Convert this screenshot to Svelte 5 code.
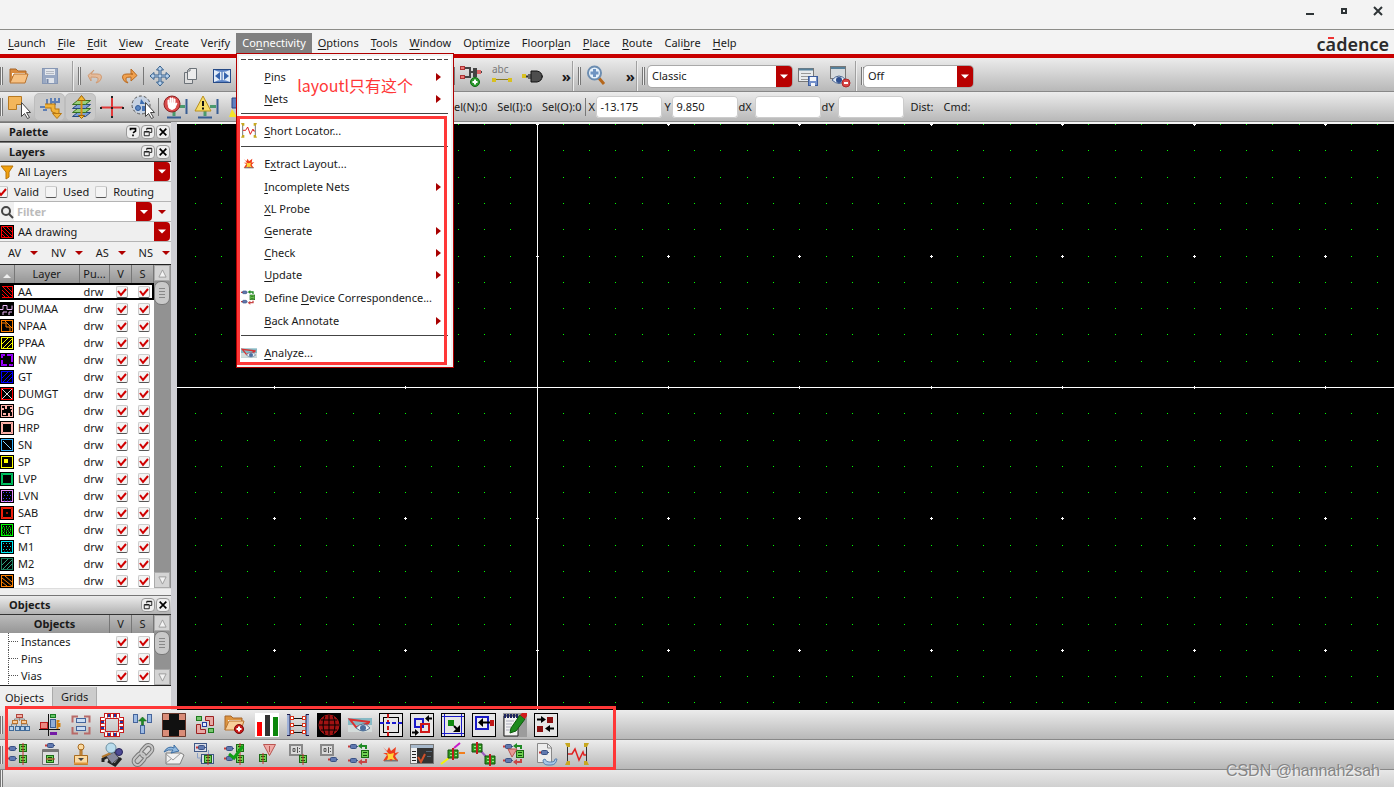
<script lang="ts">
    const menus = [
        "&Launch", "&File", "&Edit", "&View", "&Create", "Ver&ify", "Co&nnectivity", "&Options", "&Tools",
        "&Window", "Opti&mize", "Floorpl&an", "&Place", "&Route", "Cali&bre", "&Help",
    ];

    type Item = { label?: string; icon?: string; sub?: boolean; sep?: boolean };
    const items: Item[] = [
        { label: "&Pins", sub: true },
        { label: "&Nets", sub: true },
        { sep: true },
        { label: "&Short Locator...", icon: "short" },
        { sep: true },
        { label: "E&xtract Layout...", icon: "fire" },
        { label: "&Incomplete Nets", sub: true },
        { label: "&XL Probe" },
        { label: "&Generate", sub: true },
        { label: "&Check", sub: true },
        { label: "&Update", sub: true },
        { label: "Define &Device Correspondence...", icon: "corr" },
        { label: "&Back Annotate", sub: true },
        { sep: true },
        { label: "&Analyze...", icon: "analyze" },
    ];

    // "Ver&ify" -> ["Ver", "i", "fy"]
    function accel(label: string) {
        const i = label.indexOf("&");
        return [label.slice(0, i), label[i + 1], label.slice(i + 2)];
    }

    const box = (x: number, y: number, w: number, h: number, fill: string, stroke: string) =>
        `<rect x="${x + 0.5}" y="${y + 0.5}" width="${w - 1}" height="${h - 1}" fill="${fill}" stroke="${stroke}"/>`;
    const pill = (x: number, y: number) =>
        `<path d="M${x} ${y + 2.5}h3" stroke="#c43c3c" stroke-width="2"/><path d="M${x + 8} ${y + 2.5}h2" stroke="#41598a"/><rect x="${x + 2.5}" y="${y + 0.5}" width="6" height="4" rx="1" fill="#6079b0" stroke="#3b5284"/>`;
    const dev = (x: number, y: number) =>
        `<rect x="${x + 0.5}" y="${y + 0.5}" width="7" height="7" fill="#6fd052" stroke="#1c6a16"/><path d="M${x + 2} ${y + 2.5}h4M${x + 2} ${y + 5.5}h4" stroke="#124a0c"/>`;
    const bigDev = (x: number, y: number) =>
        `<path d="M${x} ${y + 1}h10v8h-10z" fill="#2f9a22" stroke="#14500c"/><path d="M${x + 2} ${y + 3.5}h2M${x + 2} ${y + 6.5}h2M${x + 7} ${y + 3.5}h2M${x + 7} ${y + 6.5}h2" stroke="#9be884"/><path d="M${x + 5} ${y - 1}v12" stroke="#c01c1c" stroke-width="2"/>`;
    const frame = `<rect x=".5" y=".5" width="23" height="23" fill="#e6e6e6" stroke="#000"/>`;
    const corr = pill(0, 1) + pill(0, 15) + dev(13, 7) +
        `<path d="M18 6V3h-5" fill="none" stroke="#1f8a25" stroke-width="2"/><path d="M14 0v6l-4-3z" fill="#1f8a25"/><path d="M18 16v3h-5" fill="none" stroke="#c84545" stroke-width="2"/><path d="M14 16v6l-4-3z" fill="#c84545"/>`;
    const pairs = pill(0, 3) + pill(0, 13) + dev(12, 1) + dev(12, 12) +
        `<path d="M16 0v22" stroke="#c93030"/>`;

    const icons: Record<string, string> = {
        open: `<path d="M3 18V5h6l2 2h8v3" fill="#d98a3d" stroke="#a8672b"/><path d="M5 9h13v3H5z" fill="#fafafa"/><path d="M3 19l4-9h14l-3 9z" fill="#f6c183" stroke="#b8732f"/>`,
        save: `<rect x="4.5" y="4.5" width="15" height="15" fill="#9aa9c3" stroke="#8797b4"/><rect x="7" y="5" width="10" height="6" fill="#e4e7ec"/><path d="M8 7.5h8M8 9.5h8" stroke="#b4b9c2"/><rect x="8" y="14" width="8" height="5" fill="#dfe3ea"/><path d="M9.500 15v4" stroke="#7788a8" stroke-width="2"/>`,
        undo: `<path d="M7 10h6q6 0 4 5q-1 3-5 4q3-3 2-5q-1-1-7-1v4L4 11.500 10 6z" transform="translate(-1 0)" fill="#e5bb9a" stroke="#d09a72"/>`,
        redo: `<path d="M17 10h-6q-6 0-4 5q1 3 5 4q-3-3-2-5q1-1 5-1v4l6-5.500L15 5v5z" fill="#f0a14f" stroke="#b86a22"/>`,
        move: `<path d="M12 2l3.500 4H13v5h5V8.500l4 3.500-4 3.500V13h-5v5h2.500L12 22l-3.500-4H11v-5H6v2.500L2 12l4-3.500V11h5V6H8.500z" fill="#b9d2ec" stroke="#345f8c"/>`,
        copy: `<path d="M5.500 8.500h8v11h-8z" fill="#ddd" stroke="#6c7278"/><path d="M10.500 4.500h7v11h-9v-9z" fill="#ececec" stroke="#6c7278"/><path d="M8 7h3V4" fill="none" stroke="#6c7278"/>`,
        stretch: `<rect x="3.500" y="5.500" width="17" height="13" fill="#5c84c6" stroke="#264a86"/><path d="M4 6q8 4 16 0v12q-8-4-16 0z" fill="#e3edf9"/><path d="M10 8v8l-5-4zM14 8v8l5-4z" fill="#3563ad"/><path d="M12 8v8" stroke="#3563ad"/>`,
        wire: box(1, 2, 5, 4, "#e77", "#a33") + box(1, 11, 5, 4, "#e77", "#a33") + `<path d="M6 4h5v9H6M11 8h4M15 4v9M17 4v9M17 8h6" fill="none" stroke="#444" stroke-width="2"/><rect x="18" y="6" width="4" height="4" fill="#d66"/><circle cx="16" cy="18" r="4.500" fill="#2d9a2d" stroke="#0b6a10"/><path d="M16 15.500v5M13.500 18h5" stroke="#fff" stroke-width="2"/>`,
        label: `<text x="2" y="9" font-size="10" font-family="Noto Sans, sans-serif" fill="#777">abc</text><path d="M4 15.500h16" stroke="#8a7a20"/><rect x="2" y="14" width="4" height="4" fill="#d8c020"/><rect x="18" y="14" width="4" height="4" fill="#d8c020"/>`,
        gate: `<path d="M2 12.500h8M18 12.500h4" stroke="#333" stroke-width="2"/><rect x="1" y="10" width="4" height="4" fill="#d8c020"/><path d="M7 10h3v5H7z" fill="#666"/><path d="M10 7h6q5 1 5 5.500T16 18h-6z" fill="#4d4d4d" stroke="#111"/>`,
        zoom: `<path d="M13 13l6 7" stroke="#b5671c" stroke-width="3"/><circle cx="9.500" cy="9" r="6.500" fill="#e6f1fb" stroke="#6c8db1" stroke-width="2"/><path d="M9.500 5v8M5.500 9h8" stroke="#6f94c2" stroke-width="3"/>`,
        saveView: `<rect x="2.500" y="4.500" width="15" height="13" fill="#e9ecee" stroke="#777"/><path d="M3 5.500h14" stroke="#56809a" stroke-width="2"/><path d="M5 9.500h10M5 12.500h8M5 15.500h7" stroke="#999"/><rect x="12.500" y="12.500" width="9" height="9" fill="#7390cb" stroke="#3d5d9c"/><path d="M14 13h6v4h-6zM15 19h4v3h-4z" fill="#f4f6fa"/>`,
        delView: `<rect x="3.500" y="2.500" width="15" height="12" fill="#d5dadd" stroke="#777"/><path d="M4 4h14" stroke="#56809a" stroke-width="2"/><path d="M5 16q7-8 14 0q-7 7-14 0z" fill="#dfe9f5" stroke="#49648f"/><circle cx="12" cy="16" r="3" fill="#2e4f8f"/><circle cx="19" cy="19" r="4" fill="#d84848" stroke="#b02626"/><path d="M17 19h4" stroke="#fff" stroke-width="2"/>`,
        select: `<path d="M1.500 1.500h13v8H9.500v5h-8z" fill="#f3b65b" stroke="#b77920"/><path d="M14.500 7.500v14l3-3 3 5 2-1-3-5h4z" fill="#fff" stroke="#444"/>`,
        route: `<path d="M2 12h6M5 15h4M9 4v7M13 3v7M17 3v7M21 3v4h-7" stroke="#5f7fb4" stroke-width="2" fill="none"/><path d="M7 11h8v3q0 2 4 2v4" stroke="#b77711" stroke-width="5" fill="none"/><path d="M7 11h8v3q0 2 4 2v4" stroke="#f2b33a" stroke-width="3" fill="none"/><path d="M14.500 18.500h9l-4.500 5z" fill="#f2b33a" stroke="#b77711"/>`,
        layers: `<path d="M3.500 21.500l5-4h13l-5 4z" fill="#7c9fd4" stroke="#27497f"/><path d="M3.500 17.500l5-4h13l-5 4z" fill="#9ad07c" stroke="#37721f"/><path d="M3.500 13.500l5-4h13l-5 4z" fill="#7c9fd4" stroke="#27497f"/><path d="M3.500 9.500l5-4h13l-5 4z" fill="#9ad07c" stroke="#37721f"/><path d="M12.500 22V5" stroke="#d98d14" stroke-width="2"/><path d="M8.500 5.500l4-5 4 5zM9.500 20.500l3 3 3-3z" fill="#f5b62e" stroke="#9b6409"/>`,
        cross: `<path d="M12 2v20M1 12.500h22" stroke="#e23a3a" stroke-width="2"/><path d="M11 1h2v2h-2zM11 21h2v2h-2zM0 12h2v2H0zM22 12h2v2h-2zM11 12h2v2h-2z" fill="#222"/>`,
        area: `<circle cx="10" cy="10" r="9" fill="#c6d2e2" stroke="#555" stroke-dasharray="3 2"/><path d="M10 4l4 5H9z" fill="#3c6db0"/><circle cx="7" cy="13" r="2.500" fill="#5a86c2" stroke="#315b99"/><rect x="11" y="11" width="5" height="5" fill="#4974b4"/><path d="M14.500 7.500v14l3-3 3 5 2-1-3-5h4z" fill="#fff" stroke="#444"/>`,
        stop: `<path d="M23.500 4v15M4 22.500h14" stroke="#375d93" stroke-width="2"/><path d="M11 15v6M16 11.500h6" stroke="#4a9a6e" stroke-width="3"/><circle cx="9" cy="9" r="8" fill="#d94c4c" stroke="#8d2222"/><path d="M5 9V5h1v3h1V3h1v5h1V3h1v5h1V4h1v5l2-1-2 5q-3 3-6 0z" fill="#fff" stroke="#fff"/>`,
        warn: `<path d="M23.500 4v15M4 22.500h14" stroke="#375d93" stroke-width="2"/><path d="M11 15v6M16 11.500h6" stroke="#4a9a6e" stroke-width="3"/><path d="M9 1l8 15H1z" fill="#f7dd69" stroke="#b98f1c"/><path d="M9 6v5M9 12.500v2" stroke="#111" stroke-width="2"/>`,
        flag: `<path d="M7 3h12v10H7z" fill="#5f7fc0" stroke="#2b4582"/><path d="M7 14l5 8H4z" fill="#f5e529"/>`,
        tree: `<path d="M12.500 4v4M7.500 10V6h10v4M4.500 14v-3h5v3M14.500 14v-3h6v3" fill="none" stroke="#888"/>` +
            box(9, 1, 7, 4, "#f3b0a6", "#b0453c") + box(5, 7, 6, 4, "#fbcd9d", "#b97330") + box(14, 7, 6, 4, "#fbcd9d", "#b97330") +
            [2, 8, 13, 18].map((x) => box(x, 13, 5, 5, "#b5cfeb", "#406a98")).join(""),
        align: box(12, 1, 6, 4, "#66c466", "#167b21") + box(12, 6, 6, 9, "#91add6", "#3b5d92") + box(2, 9, 8, 7, "#ed8880", "#bf2020") +
            `<path d="M21.500 8h-2v3h3M22.500 13h-3v3" stroke="#d48414" stroke-width="2" fill="none"/><rect x="12" y="19" width="7" height="3" fill="#741aa5"/><path d="M10.500 1v22M1 16.500h21" stroke="#111"/>`,
        group: `<path d="M9 3.500H3.500v6M15 3.500h5.500v6M3.500 14v6.500H9M20.500 14v6.500H15" fill="none" stroke="#b86a68" stroke-width="2"/>` +
            box(7, 5, 10, 5, "#cadcf2", "#44659c") + box(7, 13, 10, 5, "#cadcf2", "#44659c"),
        chip: `<path d="M4 2.500h16M4 21.500h16M2.500 4v16M21.500 4v16" stroke="#fff" stroke-width="4"/><path d="M4 2.500h16M4 21.500h16M2.500 4v16M21.500 4v16" stroke="#c81a1a" stroke-width="4" stroke-dasharray="1 2"/><path d="M8 2h2M14 2h2M8 22h2M14 22h2M2 8v2M2 14v2M22 8v2M22 14v2" stroke="#26369d" stroke-width="4"/><path d="M5.500 5.500h13v13h-13zM4 .500h16M4 23.500h16M.500 4v16M23.500 4v16" fill="none" stroke="#c81a1a"/>`,
        insert: box(2, 1, 5, 9, "#9dbbe4", "#45649b") + box(16, 1, 5, 9, "#9dbbe4", "#45649b") + box(9, 12, 5, 9, "#9dbbe4", "#45649b") +
            `<path d="M11.500 4l4 4h-3v4h-2V8h-3z" fill="#1d8b25" stroke="#0d5a12" stroke-width=".5"/>`,
        plus: `<rect width="24" height="24" fill="#d98c78"/><path d="M7 0h10v7h7v10h-7v7H7v-7H0V7h7z" fill="#111"/><path d="M.500 .500h23v23H.500z" fill="none" stroke="#6a3a2e"/>`,
        swap: box(3, 3, 6, 5, "#78c66f", "#1c7a1d") + box(15, 15, 6, 5, "#78c66f", "#1c7a1d") + box(9, 9, 5, 5, "#e5ebfa", "#233aa0") +
            `<path d="M12.500 3.500h8v9h-4v-5h-4zM3.500 11.500h4v5h5v4h-9z" fill="#e7a9a5" stroke="#9c2020"/>`,
        folder: `<path d="M1 17V3h6l2 2h9v3" fill="#dc9440" stroke="#a8672b"/><path d="M4 7h13v4H4z" fill="#fafafa"/><path d="M1 17l4-9h15l-3 9z" fill="#f8cf9a" stroke="#b8732f"/><circle cx="15" cy="16" r="4.500" fill="#c81818" stroke="#7c0808"/><path d="M15 13.500v5M12.500 16h5" stroke="#fff" stroke-width="2"/>`,
        bars: `<rect width="24" height="24" fill="#fff"/><rect x="2" y="9" width="5" height="14" fill="#f00"/><rect x="10" y="2" width="5" height="21" fill="#333"/><rect x="18" y="4" width="5" height="19" fill="#0a860a"/>`,
        ladder: `<path d="M1 1.500h3v21H1M23 1.500h-3v21h3" fill="#9db0d8" stroke="#1b1b4b"/><path d="M5 5.500h14M5 12.500h14M5 19.500h14" stroke="#111"/>` +
            [3, 10, 17].map((y) => box(4, y, 4, 4, "#fff", "#d8341c") + box(16, y, 4, 4, "#fff", "#d8341c")).join(""),
        globe: `<rect width="24" height="24"/><circle cx="12" cy="12" r="10" fill="#a01212" stroke="#a81515"/><path d="M12 2v20M2 12h20M4 7h16M4 17h16M8 3q-4 9 0 18M16 3q4 9 0 18" fill="none" stroke="#000"/>`,
        analyze: `<rect y="5" width="24" height="14" fill="#86b9c4"/><path d="M0 12h24v7H0z" fill="#d4dcda"/><path d="M22 9L2 6.500 8 14l13-4" fill="none" stroke="#d93030" stroke-width="2"/><path d="M8 15q7-8 14 0q-7 6-14 0z" fill="#e9eff6" stroke="#587494"/><circle cx="15" cy="15" r="3" fill="#4c6f9e"/>`,
        center: frame + `<rect x="4.500" y="4.500" width="15" height="15" fill="none" stroke="#000"/><path d="M9 1v22" stroke="#d01818" stroke-width="2" stroke-dasharray="4 2"/><path d="M1 10h22" stroke="#1a1ad0" stroke-width="2" stroke-dasharray="4 2"/>`,
        replace: frame + `<rect x="5" y="6" width="8" height="8" fill="none" stroke="#1a1ac8" stroke-width="2"/><rect x="11" y="11" width="8" height="8" fill="none" stroke="#d01818" stroke-width="2"/><path d="M22 5.500h-4M2 19.500h4" stroke="#000" stroke-width="2"/><path d="M19 2v7l-4-3.500zM5 16v7l4-3.500z"/>`,
        expand: frame + `<path d="M3.500 1v22M20.500 1v22M1 3.500h22M1 20.500h22" stroke="#1a1ac8"/><rect x="7" y="7" width="6" height="6" fill="#118a11"/><path d="M13 13l4 4" stroke="#000" stroke-width="2"/><path d="M19 12v7h-7z"/>`,
        pull: frame + `<rect x="4" y="4" width="12" height="12" fill="#eee" stroke="#1a1ac8" stroke-width="2"/><rect x="18" y="7" width="4" height="6" fill="#c01818"/><path d="M10 9.500h8" stroke="#000" stroke-width="2"/><path d="M11 5v9L6 9.500z"/>`,
        note: `<rect width="24" height="24" fill="#9c9c9c"/><path d="M1 3h14v20H1z" fill="#f2f2f2" stroke="#222"/><path d="M1 3h14" stroke="#1c2460" stroke-width="4" stroke-dasharray="2 1"/><path d="M3 8h8M3 11h6M3 14h5M3 17h8" stroke="#aab"/><path d="M8 15L17 2l5 4-9 12-6 2z" fill="#1d8a1d" stroke="#0b5a0b"/><path d="M17 2l2-2h5v3l-2 3z" fill="#d01c1c"/>`,
        exchange: frame + `<rect x="13" y="4" width="6" height="6" fill="#8d1010"/><rect x="3" y="13" width="6" height="6" fill="#8d1010"/><path d="M3 6.500h5M20 15.500h-5" stroke="#000" stroke-width="2"/><path d="M7 3v7l5-3.500zM16 12v7l-5-3.500z"/>`,
        pairs,
        cell: `<path d="M4.500 6.500h16v15h-16z" fill="#ddd" stroke="#777"/><path d="M5 8h15" stroke="#777" stroke-width="2"/>` + pill(7, 0) + dev(8, 12) + `<path d="M8 16h9" stroke="#c93030"/>`,
        stamp: `<circle cx="12" cy="4" r="3" fill="#fbd9a0" stroke="#a86a1e"/><path d="M11 7h2v6h-2z" fill="#d49545" stroke="#a86a1e"/><path d="M5.500 12.500h13v9h-13z" fill="#fbd9a0" stroke="#a86a1e"/><path d="M9 15h6l-3 3z" fill="#444"/><path d="M5 20.500h14" stroke="#e0973c" stroke-width="2"/>`,
        probe: `<path d="M10 12l-7 4v3M8 18l7 4 6-7" fill="none" stroke="#222" stroke-width="3"/><path d="M6 13l8-4 5 6-7 6z" fill="#86889c" stroke="#333"/><path d="M2 14l9-4" stroke="#b57b32" stroke-width="2"/><circle cx="11" cy="5" r="5" fill="#b9dcec" stroke="#6e91a3"/><circle cx="19" cy="9" r="3.500" fill="#4d4a94" stroke="#27245a"/>`,
        link: `<g transform="rotate(-48 12 12)" fill="none"><rect x="0" y="8" width="13" height="8" rx="4" stroke="#777" stroke-width="4"/><rect x="11" y="8" width="13" height="8" rx="4" stroke="#777" stroke-width="4"/><rect x="0" y="8" width="13" height="8" rx="4" stroke="#c6c6c6" stroke-width="2"/><rect x="11" y="8" width="13" height="8" rx="4" stroke="#c6c6c6" stroke-width="2"/></g>`,
        mail: `<path d="M4 10h15l3 2-4 9H4z" fill="#f1f1f1" stroke="#808080"/><path d="M4 11l7 6 8-7M4 20l5-4" fill="none" stroke="#999"/><path d="M2 9q4-7 10-4V2l5 6-8 2 2-3q-5-1-9 2z" fill="#8fb8df" stroke="#3d6ea2"/>`,
        stack: box(1, 0, 13, 9, "#d9dde8", "#3f5785") + pill(3, 2) + `<path d="M4.500 10v5h11v-8M7.500 16v3" fill="none" stroke="#8aa0c8"/>` + box(8, 11, 13, 10, "#d9dde8", "#3f5785") + dev(11, 12) + `<path d="M15 11v11" stroke="#c93030"/>`,
        verify: pairs + `<path d="M5 11l5 4 9-12" fill="none" stroke="#10a016" stroke-width="3"/>`,
        funnel: `<path d="M8.500 1.500h12l-6 11z" fill="#efaaa6" stroke="#b95450"/><path d="M14.500 3v6" stroke="#b95450"/>` + dev(4, 11) + `<path d="M8 10v11" stroke="#c93030"/>`,
        sheetDev: `<rect x="4" y="2" width="12" height="10" fill="#dcdcdc" stroke="#888" stroke-width="2"/><path d="M7 5.500h2v3H7zM11.500 4v6M13 5.500h1M13 8.500h1" fill="none" stroke="#555"/>` + dev(13, 12) + `<path d="M17 11v11" stroke="#c93030"/>`,
        sheetPill: `<rect x="4" y="2" width="12" height="10" fill="#dcdcdc" stroke="#888" stroke-width="2"/><path d="M7 5.500h2v3H7zM11.500 4v6M13 5.500h1M13 8.500h1" fill="none" stroke="#555"/>` + pill(11, 14),
        corr,
        fire: `<path d="M5 17.500h14" stroke="#777" stroke-width="2"/><path d="M4 4l4 4 2-4 2 4 5-4-1 6 4-1-4 4 3 5-5-2-2 2-2-2-6 2 4-6-4-2 5 0z" fill="#ee3c1c"/><path d="M8 10l3 1 4-1-1 4 2 3-4-1-4 1 1-3z" fill="#ffd43a"/>`,
        list: `<rect x=".500" y="1.500" width="23" height="19" fill="#333" stroke="#777"/><path d="M1 3.500h22" stroke="#a7b9cc" stroke-width="3"/><rect x="1" y="5" width="6" height="15" fill="#eee"/><path d="M2 8.500h4M2 11.500h4M2 14.500h4M2 17.500h4" stroke="#222"/><path d="M8 14l3 5L15 11" fill="none" stroke="#d25028" stroke-width="2"/><path d="M16 8.500h6M17 13.500h4" stroke="#567"/>`,
        flight: `<path d="M0 21l8-6" stroke="#f4f40a" stroke-width="2"/><path d="M13 5l6-5" stroke="#c81ac8" stroke-width="2"/><path d="M18 10h6" stroke="#f27e1c" stroke-width="2"/>` + bigDev(7, 6),
        net: `<path d="M8 7l9 10" stroke="#9a5ac0" stroke-width="2"/>` + bigDev(0, 0) + bigDev(13, 12),
        corrFilter: corr + `<path d="M5 6h9l-5 8z" fill="#e59a96" stroke="#b95450"/>`,
        docDown: `<path d="M3.500 .500h10l4 4v15h-14z" fill="#ededed" stroke="#888"/><path d="M13.500 1v4h4" fill="none" stroke="#888"/>` + pill(5, 7) + `<path d="M11 16q1 3 4 3h3q3 0 3-3h2q-1 6-6 6h-3q-5 0-5-5z" fill="#a9c6e6" stroke="#5c82b0"/>`,
        short: `<path d="M2.500 2v19M21.500 2v19" stroke="#333"/><path d="M3 11h4l3-5 4 11 4-8 1 3h2" fill="none" stroke="#e02020" stroke-width="1.500"/><path d="M0 0h5v4H2zM24 0h-5v4h3zM0 22h5v-4H2zM24 22h-5v-4h3z" fill="#c8a820"/>`,
    };

    const bottomA = ["tree", "align", "group", "chip", "insert", "plus", "swap", "folder", "bars", "ladder", "globe", "analyze", "center", "replace", "expand", "pull", "note", "exchange"];
    const bottomB = ["pairs", "cell", "stamp", "probe", "link", "mail", "stack", "verify", "funnel", "sheetDev", "sheetPill", "corr", "fire", "list", "flight", "net", "corrFilter", "docDown", "short"];

    const diag = (c: string) => `<path d="M2 9l3 3M2 5l7 7M3 2l9 9M7 2l5 5" stroke="${c}"/>`;
    const slash = (c: string) => `<path d="M2 8l6-6M3 12l9-9M7 12l5-5" fill="none" stroke="${c}"/>`;
    const dots = (c: string) => `<path d="M3 3.500h9M4 6.500h9M3 9.500h9M4 12h9" stroke="${c}" stroke-dasharray="1 2"/>`;
    const thick = (c: string) => `<path d="M2.500 2.500h9v9h-9z" fill="none" stroke="${c}"/>`;
    const layers = [
        { name: "AA", color: "#f00", art: diag("#f00") },
        { name: "DUMAA", color: "#000", art: `<path d="M0 7.500h3v-4h4v4h5v-4M3 13V10h4M9 13v-3h3" fill="none" stroke="#e9b4f4"/>` },
        { name: "NPAA", color: "#ff8000", art: `<path d="M2 4h4v4h4v4M5 2l8 8" fill="none" stroke="#ff8000"/>` },
        { name: "PPAA", color: "#ff0", art: slash("#ff0") },
        { name: "NW", color: "#9a00ff", art: thick("#9a00ff") + `<path d="M6 1v2M1 6h2M11 10h2M8 11v2" stroke="#000" stroke-width="2"/>` },
        { name: "GT", color: "#00f", art: slash("#00f") },
        { name: "DUMGT", color: "#f00", art: `<path d="M2 2l10 10M12 2L2 12" stroke="#ddd"/>` },
        { name: "DG", color: "#ffb0a8", art: `<path d="M2 5h2M6 2v3M10 4h2M3 10h3M9 9v3M11 7h1" stroke="#ffb0a8" stroke-width="2"/>` },
        { name: "HRP", color: "#ffb0a8", art: thick("#ffb0a8") },
        { name: "SN", color: "#35b4ff", art: `<path d="M3 3l8 8" stroke="#8fd4ff"/>` },
        { name: "SP", color: "#ff0", art: `<path d="M4 4h4v4H4z" fill="#ff0"/>` },
        { name: "LVP", color: "#00c060", art: thick("#00c060") },
        { name: "LVN", color: "#e890ff", art: dots("#4040ff") },
        { name: "SAB", color: "#f0200c", art: thick("#f0200c") + `<path d="M6 6h2v2H6z" fill="#a01000"/>` },
        { name: "CT", color: "#0f0", art: dots("#0f0") + `<path d="M2 5h10M2 8h10M2 11h10" stroke="#0f0" stroke-dasharray="1 1"/>` },
        { name: "M1", color: "#00f0ff", art: dots("#00d0e0") },
        { name: "M2", color: "#208060", art: slash("#30a080") },
        { name: "M3", color: "#ff8000", art: `<path d="M2 8l5 4M2 4l10 8M5 2l7 6" stroke="#ff8000"/>` },
    ];
    const objects = ["Instances", "Pins", "Vias"];

    // grid of the layout canvas, origin where the two axes cross
    const origin = { x: 360, y: 263 };
    const pitch = 26.28;
    let width = $state(1217);
    let height = $state(586);

    const grid = $derived.by(() => {
        let minor = "";
        let major = "";
        for (let i = Math.ceil(-origin.x / pitch); origin.x + i * pitch < width; i++) {
            const x = Math.floor(origin.x + i * pitch);
            for (let j = Math.ceil(-origin.y / pitch - 0.1); origin.y + j * pitch < height; j++) {
                const y = Math.round(origin.y + j * pitch);
                if (i % 5 === 0 && j % 5 === 0) major += `M${x - 1} ${y}h3v1h-3zM${x} ${y - 1}h1v3h-1z`;
                else if (i !== 0 && j !== 0) minor += `M${x} ${y}h1v1h-1z`;
            }
        }
        return { minor, major };
    });
</script>

{#snippet text(label: string)}
    {@const [pre, key, post] = accel(label)}
    <span>{pre}<u>{key}</u>{post}</span>
{/snippet}

{#snippet tool(name: string, on = false)}
    <button class="tool" class:on aria-label={name}>
        <svg viewBox="0 0 24 24">{@html icons[name]}</svg>
    </button>
{/snippet}

{#snippet dock(title: string, help = false)}
    <header class="dock">
        <b>{title}</b>
        {#if help}
            <button aria-label="Help"><svg viewBox="0 0 12 12"><path d="M3 4V2h6v3L6 7M6 9v2" /></svg></button>
        {/if}
        <button aria-label="Float"><svg viewBox="0 0 12 12"><path class="thin" d="M4.500 4V1.500h6v5H8M1.500 5.500h6v5h-6zM2 6h5M5 2h5" /></svg></button>
        <button aria-label="Close"><svg viewBox="0 0 12 12"><path d="M2 2l8 8M10 2l-8 8" /></svg></button>
    </header>
{/snippet}

{#snippet scrollbar()}
    <div class="scrollbar">
        <span class="step"><svg viewBox="0 0 10 10"><path d="M5 1l4 8H1z" /></svg></span>
        <span class="thumb"></span>
        <span class="step end"><svg viewBox="0 0 10 10"><path d="M5 9l4-8H1z" /></svg></span>
    </div>
{/snippet}

<div class="app">
    <div class="titlebar">
        <button aria-label="Minimize"><svg viewBox="0 0 10 10"><path d="M1 8h8" /></svg></button>
        <button aria-label="Maximize"><svg viewBox="0 0 10 10"><path d="M3 3h4v4H3z" /></svg></button>
        <button aria-label="Close window"><svg viewBox="0 0 10 10"><path d="M1 1l8 8M9 1L1 9" /></svg></button>
    </div>

    <nav class="menubar">
        {#each menus as menu}
            <div class="menu" class:open={menu === "Co&nnectivity"}>
                <button>{@render text(menu)}</button>
                {#if menu === "Co&nnectivity"}
                    <div class="popup">
                        <div class="tear"></div>
                        {#each items as item}
                            {#if item.label}
                                <button class="item" class:tall={item.icon}>
                                    <span class="item-icon">
                                        {#if item.icon}<svg viewBox="0 0 24 24">{@html icons[item.icon]}</svg>{/if}
                                    </span>
                                    {@render text(item.label)}
                                    {#if item.sub}<i class="sub"></i>{/if}
                                </button>
                            {:else}
                                <hr />
                            {/if}
                        {/each}
                        <div class="mark"></div>
                        <div class="note">layoutl只有这个</div>
                    </div>
                {/if}
            </div>
        {/each}
        <div class="brand">c<span>a</span>dence</div>
    </nav>

    <div class="toolbar first">
        <div class="group"><i class="grip"></i>{@render tool("open")}{@render tool("save")}</div>
        <div class="group edit">
            <i class="grip"></i>{@render tool("undo")}{@render tool("redo")}<i class="divider"></i>
            {@render tool("move")}{@render tool("copy")}{@render tool("stretch")}
        </div>
        <div class="group tight">
            <i class="grip"></i>{@render tool("wire")}{@render tool("label")}{@render tool("gate")}
            <button class="more">»</button>
        </div>
        <div class="group tight"><i class="grip"></i>{@render tool("zoom")}<button class="more">»</button></div>
        <div class="group tight">
            <i class="grip"></i>
            <select class="combo workspace" aria-label="Workspace"><option>Classic</option></select>
            {@render tool("saveView")}{@render tool("delView")}
        </div>
        <div class="group last">
            <i class="grip"></i>
            <select class="combo dim" aria-label="Dimming"><option>Off</option></select>
        </div>
    </div>

    <div class="toolbar">
        <div class="group modes">
            <i class="grip"></i>{@render tool("select")}{@render tool("route", true)}{@render tool("layers", true)}
            {@render tool("cross")}{@render tool("area")}<i class="divider"></i>
            {@render tool("stop")}{@render tool("warn")}{@render tool("flag")}
        </div>
        <div class="status">
            <span>Sel(N):0</span><span>Sel(I):0</span><span>Sel(O):0</span>
        </div>
        <i class="divider"></i>
        <label class="coord">X<input value="-13.175" /></label>
        <label class="coord">Y<input value="9.850" /></label>
        <label class="coord wide">dX<input /></label>
        <label class="coord wide">dY<input /></label>
        <div class="status end"><span>Dist:</span><span>Cmd:</span></div>
    </div>

    <main>
        <aside>
            {@render dock("Palette", true)}
            {@render dock("Layers")}
            <div class="row">
                <svg class="lead" viewBox="0 0 14 14"><path d="M1 1h12L9 7v5l-3 2V7z" fill="#f2a10c" stroke="#b87408" /></svg>
                <select class="combo flat" aria-label="Layer set"><option>All Layers</option></select>
            </div>
            <div class="row checks">
                <label><input type="checkbox" checked />Valid</label>
                <label><input type="checkbox" />Used</label>
                <label><input type="checkbox" />Routing</label>
            </div>
            <div class="row filter">
                <svg class="lead" viewBox="0 0 14 14"><circle cx="6" cy="6" r="4" fill="#eee" stroke="#444" stroke-width="2" /><path d="M9 9l4 4" stroke="#444" stroke-width="2" /></svg>
                <input placeholder="Filter" aria-label="Filter" />
                <button class="drop" aria-label="Filter history"></button>
                <i class="caret"></i>
            </div>
            <div class="row">
                <svg class="lead" viewBox="0 0 14 14"><rect width="14" height="14" /><path d="M1.500 1.500h11v11h-11z" fill="#000" stroke="#f00" />{@html diag("#f00")}</svg>
                <select class="combo flat" aria-label="Active layer"><option>AA drawing</option></select>
            </div>
            <div class="row toggles">
                {#each ["AV", "NV", "AS", "NS"] as name}
                    <button>{name}<i class="caret"></i></button>
                {/each}
            </div>

            <div class="list layers">
                <div class="scroll">
                    <table>
                        <thead>
                            <tr><th class="c-sw"><i class="sort"></i></th><th>Layer</th><th class="c-pu">Pu...</th><th class="c-box">V</th><th class="c-box">S</th></tr>
                        </thead>
                        <tbody>
                            {#each layers as layer, i}
                                <tr class:current={i === 0}>
                                    <td class="c-sw">
                                        <svg viewBox="0 0 14 14">
                                            <rect width="14" height="14" />
                                            <rect x="1.5" y="1.5" width="11" height="11" stroke={layer.color} />
                                            {@html layer.art}
                                        </svg>
                                    </td>
                                    <td>{layer.name}</td>
                                    <td>drw</td>
                                    <td class="tick"><input type="checkbox" checked aria-label="{layer.name} visible" /></td>
                                    <td class="tick"><input type="checkbox" checked aria-label="{layer.name} selectable" /></td>
                                </tr>
                            {/each}
                        </tbody>
                    </table>
                </div>
                {@render scrollbar()}
            </div>

            {@render dock("Objects")}
            <div class="list objects">
                <div class="scroll">
                    <table>
                        <thead>
                            <tr><th><b>Objects</b></th><th class="c-box">V</th><th class="c-box">S</th></tr>
                        </thead>
                        <tbody>
                            {#each objects as name}
                                <tr>
                                    <td class="branch">{name}</td>
                                    <td class="tick"><input type="checkbox" checked aria-label="{name} visible" /></td>
                                    <td class="tick"><input type="checkbox" checked aria-label="{name} selectable" /></td>
                                </tr>
                            {/each}
                        </tbody>
                    </table>
                </div>
                {@render scrollbar()}
            </div>
            <div class="tabs"><button class="active">Objects</button><button>Grids</button></div>
        </aside>

        <div class="canvas" bind:clientWidth={width} bind:clientHeight={height}>
            <svg shape-rendering="crispEdges">
                <path d={grid.minor} fill="#00ff00" />
                <path d={grid.major} fill="#fff" />
                <rect x={origin.x} y="0" width="1" height="100%" fill="#fff" />
                <rect x="0" y={origin.y} width="100%" height="1" fill="#fff" />
            </svg>
        </div>
    </main>

    <footer>
        <div class="toolbar"><i class="grip"></i>{#each bottomA as name}{@render tool(name)}{/each}</div>
        <div class="toolbar"><i class="grip"></i>{#each bottomB as name}{@render tool(name)}{/each}</div>
        <div class="toolbar prompt"><i class="grip"></i></div>
        <div class="mark"></div>
        <div class="watermark">CSDN @hannah2sah</div>
    </footer>
</div>

<style>
    :global(body) {
        background: #efefef;
    }

    .app {
        display: flex;
        flex-direction: column;
        height: 100vh;
        overflow: hidden;
        font: 11px/16px "Noto Sans", sans-serif;
        color: #1a1a1a;
    }

    .app :global(*) {
        box-sizing: border-box;
    }

    button,
    input,
    select {
        font: inherit;
        color: inherit;
        margin: 0;
        padding: 0;
        border: 0;
        background: none;
        border-radius: 0;
    }

    svg {
        display: block;
        overflow: visible;
    }

    i {
        flex: none;
    }

    .titlebar {
        flex: none;
        display: flex;
        justify-content: flex-end;
        gap: 24px;
        height: 30px;
        padding: 6px 11px 0 0;
        background: #f3f3f3;
        border-bottom: 1px solid #8c8c88;
    }

    .titlebar button {
        width: 10px;
        height: 10px;
    }

    .titlebar path {
        fill: none;
        stroke: #2e3436;
        stroke-width: 2;
    }

    .menubar {
        flex: none;
        display: flex;
        height: 28px;
        padding-top: 3px;
        padding-left: 2px;
        background: #f3f3f3;
        border-bottom: 4px solid #c80000;
    }

    .menu {
        position: relative;
        height: 20px;
    }

    .menu > button {
        height: 20px;
        padding: 0 6px;
        white-space: nowrap;
    }

    .menu.open > button {
        background: #808080;
        color: #fff;
    }

    u {
        text-underline-offset: 2px;
    }

    .brand {
        margin-left: auto;
        padding-right: 5px;
        font-size: 18px;
        line-height: 22px;
        font-weight: 600;
        color: #2b2b2b;
    }

    .brand span {
        position: relative;
    }

    .brand span::before {
        content: "";
        position: absolute;
        top: 5px;
        left: 2px;
        width: 6px;
        height: 2px;
        background: #e33;
    }

    .popup {
        position: absolute;
        z-index: 5;
        top: 20px;
        left: 0;
        width: 218px;
        padding: 0 5px 2px 4px;
        background: #fff;
        border: 1px solid #b00000;
        box-shadow: inset 0 0 0 2px #f2f2f2;
    }

    .tear {
        height: 12px;
        background: repeating-linear-gradient(90deg, #444 0 5px, transparent 5px 7px) 0 5px / 100% 1px no-repeat;
    }

    .item {
        display: flex;
        align-items: center;
        width: 100%;
        height: 22px;
        padding-right: 7px;
        text-align: left;
        white-space: nowrap;
    }

    .item.tall {
        height: 24px;
    }

    .item-icon {
        flex: none;
        width: 23px;
    }

    .item-icon svg {
        width: 16px;
        height: 16px;
    }

    .sub {
        margin-left: auto;
        border-left: 5px solid #a80000;
        border-top: 4px solid transparent;
        border-bottom: 4px solid transparent;
    }

    hr {
        height: 9px;
        margin: 0;
        border: 0;
        background: linear-gradient(#444, #444) 0 3px / 100% 1px no-repeat;
    }

    .mark {
        position: absolute;
        border: 3px solid #ff3737;
        pointer-events: none;
    }

    .popup .mark {
        top: 62px;
        bottom: 2px;
        left: 0;
        right: 6px;
    }

    .note {
        position: absolute;
        top: 19px;
        left: 60px;
        font: 16px/24px "Noto Sans CJK SC", sans-serif;
        color: #ff3737;
        white-space: nowrap;
    }

    .toolbar {
        flex: none;
        display: flex;
        align-items: center;
        height: 30px;
        background: linear-gradient(#ececec, #b8b8b8);
        border-bottom: 1px solid #888;
    }

    .toolbar.first {
        height: 34px;
        padding-top: 3px;
    }

    .group {
        flex: none;
        display: flex;
        align-items: center;
        height: 100%;
        padding-right: 7px;
        border-right: 1px solid #a0a0a0;
    }

    .group + .group {
        padding-left: 4px;
        border-left: 1px solid #eee;
    }

    .group.tight {
        padding-right: 1px;
    }

    .group.last,
    .group.modes {
        border-right: 0;
    }

    .edit {
        width: 374px;
    }

    .modes {
        width: 448px;
    }

    .grip {
        width: 3px;
        height: 18px;
        background: repeating-linear-gradient(90deg, #777 0 1px, #eee 1px 2px);
    }

    .divider {
        width: 1px;
        height: 18px;
        background: #777;
    }

    .tool {
        flex: none;
        display: flex;
        align-items: center;
        justify-content: center;
        width: 31px;
        height: 28px;
    }

    .tool.on {
        background: #c9c9c9;
        border: 1px solid #bdbdbd;
        border-radius: 5px;
    }

    .tool svg {
        width: 24px;
        height: 24px;
    }

    .more {
        width: 23px;
        font-size: 15px;
        font-weight: 700;
        text-align: right;
    }

    .combo {
        appearance: none;
        height: 21px;
        padding-left: 4px;
        border-radius: 4px;
        background: #fff url("data:image/svg+xml,%3Csvg xmlns='http://www.w3.org/2000/svg' width='16' height='22'%3E%3Cpath fill='%23b80000' d='M0 0h16v22H0z'/%3E%3Cpath fill='%23fff' d='M4 9h8l-4 4z'/%3E%3C/svg%3E") right center no-repeat;
        box-shadow: 0 0 0 1px #a9a9a9;
    }

    .workspace {
        width: 144px;
        margin-left: 3px;
    }

    .dim {
        width: 109px;
    }

    .status {
        display: flex;
        gap: 10px;
        margin-right: 4px;
        white-space: nowrap;
    }

    .status.end {
        margin-left: 6px;
    }

    .coord {
        display: flex;
        align-items: center;
        justify-content: space-between;
        width: 76px;
        padding-left: 2px;
    }

    .coord.wide {
        width: 83px;
        padding-left: 0;
    }

    .coord input {
        width: 66px;
        height: 22px;
        padding-left: 4px;
        background: #fff;
        border-radius: 4px;
        box-shadow: inset 0 0 0 1px #ccc;
    }

    main {
        flex: 1;
        display: flex;
        min-height: 0;
        background: #f4f4f4;
    }

    aside {
        flex: none;
        display: flex;
        flex-direction: column;
        width: 177px;
        overflow: hidden;
        background: #efefef;
        border-right: 6px solid #cfcfd4;
    }

    .dock {
        flex: none;
        display: flex;
        align-items: center;
        gap: 1px;
        height: 20px;
        padding: 0 1px 0 9px;
        background: linear-gradient(#ececec, #b2b2b2);
        border-top: 1px solid #777;
        border-bottom: 1px solid #333;
    }

    .dock b {
        margin-right: auto;
    }

    .dock button {
        width: 14px;
        height: 14px;
        padding: 1px;
        background: #eee;
        border: 1px solid #999;
        border-radius: 4px;
    }

    .dock path {
        fill: none;
        stroke: #000;
        stroke-width: 2;
    }

    .dock .thin {
        stroke-width: 1;
    }

    .row {
        flex: none;
        display: flex;
        align-items: center;
        height: 20px;
        padding-right: 1px;
        border-bottom: 1px solid #b4b4b4;
        background: #f0f0f0;
    }

    .lead {
        flex: none;
        width: 14px;
        height: 14px;
    }

    .flat {
        flex: 1;
        height: 19px;
        background-color: #efefef;
        box-shadow: none;
    }

    .checks label {
        display: flex;
        align-items: center;
        gap: 6px;
        margin-right: 6px;
    }

    .checks {
        margin-left: -4px;
    }

    input[type="checkbox"] {
        appearance: none;
        display: block;
        width: 12px;
        height: 12px;
        background-color: #f4f4f4;
        border: 1px solid #ccc;
        border-bottom-color: #555;
        border-right-color: #aaa;
        border-radius: 2px;
    }

    input[type="checkbox"]:checked {
        background-image: url("data:image/svg+xml,%3Csvg xmlns='http://www.w3.org/2000/svg' viewBox='0 0 10 10'%3E%3Cpath d='M1 4l3 4 5-6' fill='none' stroke='%23d00000' stroke-width='2'/%3E%3C/svg%3E");
    }

    .filter input {
        flex: 1;
        min-width: 0;
        height: 19px;
        padding-left: 3px;
        background: #fff;
    }

    .filter input::placeholder {
        color: #bbb;
        font-weight: 700;
    }

    .drop {
        width: 16px;
        height: 19px;
        border-radius: 0 4px 4px 0;
        background: #b80000 url("data:image/svg+xml,%3Csvg xmlns='http://www.w3.org/2000/svg' viewBox='0 0 16 19'%3E%3Cpath fill='%23fff' d='M4 8h8l-4 4z'/%3E%3C/svg%3E");
    }

    .caret {
        border-top: 4px solid #b00000;
        border-left: 4px solid transparent;
        border-right: 4px solid transparent;
    }

    .filter .caret {
        margin: 0 4px 0 6px;
    }

    .toggles {
        height: 23px;
        padding-left: 8px;
        justify-content: space-between;
        border-bottom-color: #222;
    }

    .toggles button {
        display: flex;
        align-items: center;
        gap: 9px;
    }

    .list {
        display: flex;
        background: #fff;
    }

    .layers {
        flex: 1;
        min-height: 0;
        margin-bottom: 6px;
        border-bottom: 1px solid #ddd;
    }

    .objects {
        flex: none;
        height: 71px;
        border-bottom: 1px solid #222;
    }

    .scroll {
        flex: 1;
        overflow: hidden;
    }

    table {
        width: 100%;
        table-layout: fixed;
        border-collapse: collapse;
    }

    th {
        height: 18px;
        padding: 0;
        font-weight: 400;
        background: linear-gradient(#bbb, #969696);
        border-right: 1px solid #777;
    }

    td {
        height: 17px;
        padding: 0 0 0 4px;
        line-height: 16px;
    }

    td.tick {
        padding-left: 6px;
    }

    .c-sw {
        width: 14px;
        padding: 0;
    }

    .c-sw svg {
        width: 14px;
        height: 14px;
    }

    .c-pu {
        width: 30px;
    }

    .c-box {
        width: 22px;
    }

    .current {
        outline: 2px solid #000;
        outline-offset: -2px;
    }

    .sort {
        display: inline-block;
        border-bottom: 4px solid #eee;
        border-left: 4px solid transparent;
        border-right: 4px solid transparent;
    }

    .scrollbar {
        flex: none;
        display: flex;
        flex-direction: column;
        width: 17px;
        padding-right: 1px;
        background: #929292;
    }

    .step {
        display: flex;
        align-items: center;
        justify-content: center;
        height: 16px;
        background: #d4d4d4;
        border: 1px solid #aaa;
    }

    .step.end {
        margin-top: auto;
    }

    .step svg {
        width: 9px;
        height: 9px;
    }

    .step path {
        fill: #f2f2f2;
        stroke: #999;
    }

    .thumb {
        height: 24px;
        border: 1px solid #777;
        border-radius: 7px;
        background: repeating-linear-gradient(#888 0 1px, transparent 1px 3px) 4px 6px / 6px 10px no-repeat #c9c9c9;
    }

    td.branch {
        padding-left: 21px;
        background: repeating-linear-gradient(90deg, #555 0 1px, transparent 1px 2px) 9px 8px / 9px 1px no-repeat,
            repeating-linear-gradient(#555 0 1px, transparent 1px 2px) 8px 0 / 1px 100% no-repeat;
    }

    .tabs {
        flex: none;
        display: flex;
        height: 24px;
        padding-top: 1px;
    }

    .tabs button {
        height: 19px;
        padding: 0 8px;
        background: #ccc;
        border-right: 1px solid #aaa;
    }

    .tabs .active {
        height: 22px;
        padding-left: 5px;
        background: #efefef;
    }

    .canvas {
        flex: 1;
        min-width: 0;
        margin-top: 2px;
        background: #000;
        overflow: hidden;
    }

    .canvas svg {
        width: 100%;
        height: 100%;
    }

    footer {
        flex: none;
        position: relative;
    }

    .prompt {
        height: 17px;
        border-bottom: 0;
        background: linear-gradient(#e8e8e8, #d0d0d0);
    }

    footer .mark {
        top: -4px;
        left: 5px;
        width: 611px;
        height: 64px;
    }

    .watermark {
        position: absolute;
        right: 14px;
        bottom: 4px;
        font: 16px/24px "Liberation Sans", sans-serif;
        color: #858585;
        text-shadow: 1px 1px 0 #eee;
    }
</style>
